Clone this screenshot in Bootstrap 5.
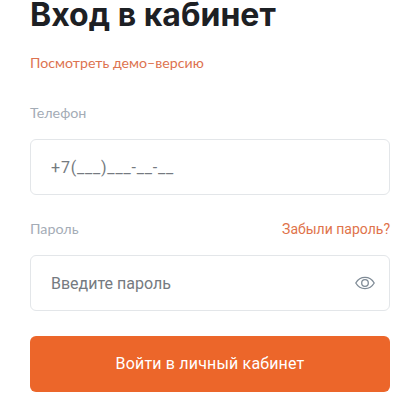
<!doctype html>
<html lang="ru"><head><meta charset="utf-8">
<link href="https://cdn.jsdelivr.net/npm/bootstrap@5.3.0/dist/css/bootstrap.min.css" rel="stylesheet">
<style>
html,body{height:400px;overflow:hidden;background:#fff}
.login-wrap{padding:0 29px 0 30px;font-family:Roboto,sans-serif}
.login-title{font-family:Inter,"Open Sans",sans-serif;font-weight:700;font-size:32px;line-height:30px;color:#1d2024;margin:0}
.demo-link{display:block;margin-top:23px;font-family:Lato,sans-serif;font-size:14.2px;line-height:20px;color:#dd7350;text-decoration:none}
.field-label{font-family:Lato,sans-serif;font-size:14.3px;line-height:20px;color:#a4acb6;margin:0}
.first-label{margin-top:30px}
.field-box{height:56px;border:1px solid #e3e6e9;border-radius:6px;padding:0 20px;font-family:Roboto,sans-serif;font-size:16px;color:#757a80;box-shadow:none}
.field-box::placeholder{color:#757a80;opacity:1}
.first-box{margin-top:16px}
.phone-box::placeholder{letter-spacing:.8px}
.pass-row{margin-top:24px}
.forgot{font-size:14px;line-height:20px;color:#e0734a;text-decoration:none}
.pass-box{margin-top:16px}
.eye-btn{top:50%;right:15px;transform:translateY(-50%);line-height:0}
.enter-btn{margin-top:25px;height:56px;background:#ec662a;border:0;border-radius:6px;color:#fff;font-family:Roboto,sans-serif;font-size:16px;font-weight:400;letter-spacing:.18px}
</style></head><body>
<main class="login-wrap">
<h1 class="login-title">Вход в кабинет</h1>
<a class="demo-link" href="#">Посмотреть демо–версию</a>
<form>
<label class="field-label first-label d-block" for="ph">Телефон</label>
<input id="ph" class="form-control field-box first-box phone-box" placeholder="+7(___)___-__-__">
<div class="d-flex justify-content-between align-items-center pass-row">
<label class="field-label" for="pw">Пароль</label>
<a class="forgot" href="#">Забыли пароль?</a>
</div>
<div class="position-relative pass-box">
<input id="pw" type="password" class="form-control field-box" placeholder="Введите пароль">
<span class="eye-btn position-absolute"><svg width="20" height="16" viewBox="0 0 20 16" fill="none" stroke="#7f8b96" stroke-width="1.3"><path d="M.8 8C3 4.2 6.2 2.4 10 2.4S17 4.2 19.2 8C17 11.8 13.800 13.600 10 13.600S3 11.800 .8 8Z"/><circle cx="10" cy="8" r="3.300"/></svg></span>
</div>
<button type="button" class="btn w-100 enter-btn">Войти в личный кабинет</button>
</form>
</main>
</body></html>
